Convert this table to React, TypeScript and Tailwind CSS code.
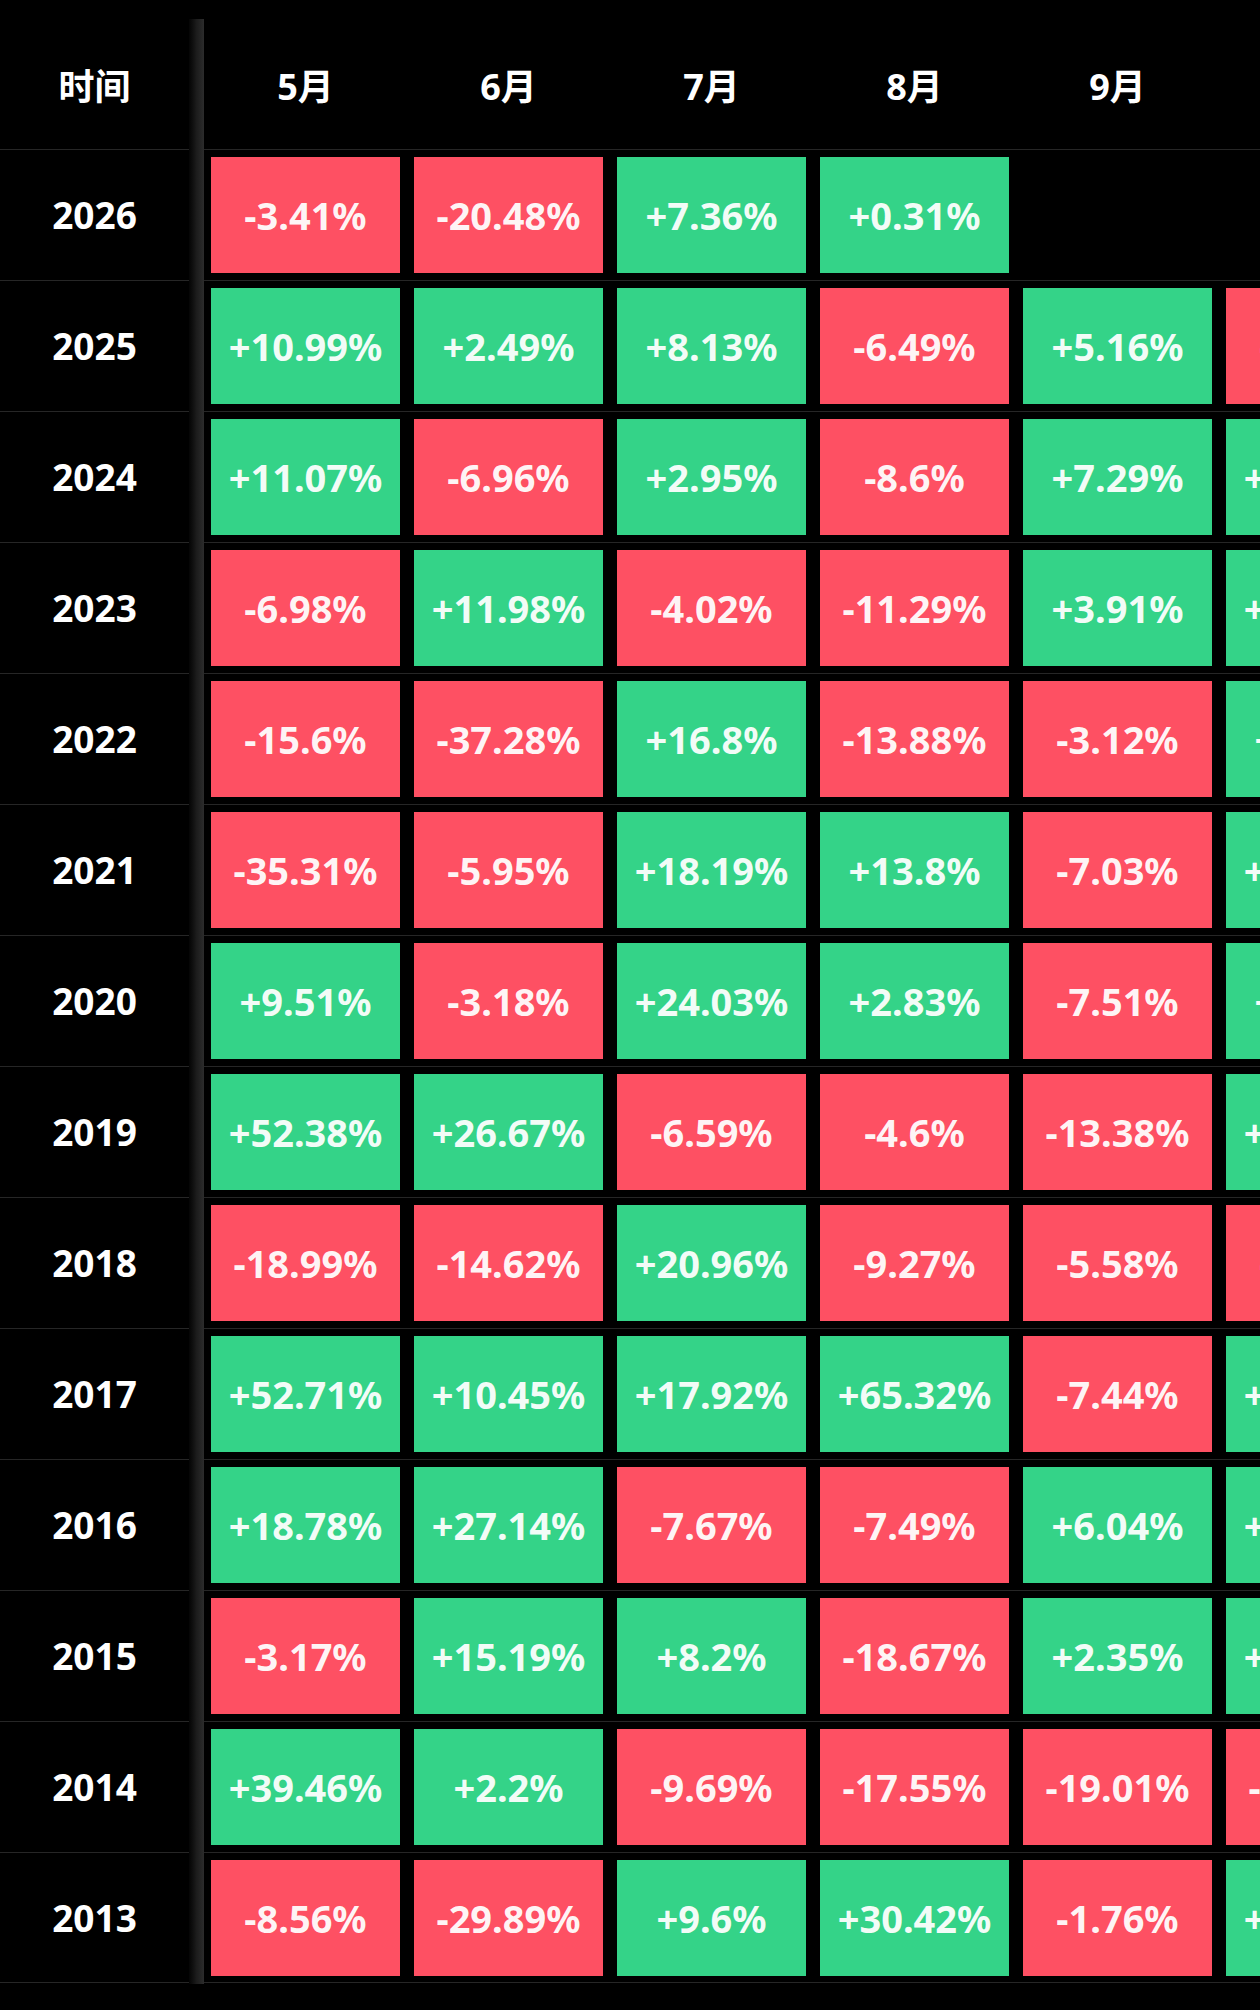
import React from "react";

const months = ["5月", "6月", "7月", "8月", "9月", "10月"];

const data: { year: string; vals: (string | null)[] }[] = [
  { year: "2026", vals: ["-3.41%", "-20.48%", "+7.36%", "+0.31%", null, null] },
  { year: "2025", vals: ["+10.99%", "+2.49%", "+8.13%", "-6.49%", "+5.16%", "-3.69%"] },
  { year: "2024", vals: ["+11.07%", "-6.96%", "+2.95%", "-8.6%", "+7.29%", "+10.76%"] },
  { year: "2023", vals: ["-6.98%", "+11.98%", "-4.02%", "-11.29%", "+3.91%", "+28.52%"] },
  { year: "2022", vals: ["-15.6%", "-37.28%", "+16.8%", "-13.88%", "-3.12%", "+5.56%"] },
  { year: "2021", vals: ["-35.31%", "-5.95%", "+18.19%", "+13.8%", "-7.03%", "+39.93%"] },
  { year: "2020", vals: ["+9.51%", "-3.18%", "+24.03%", "+2.83%", "-7.51%", "+27.7%"] },
  { year: "2019", vals: ["+52.38%", "+26.67%", "-6.59%", "-4.6%", "-13.38%", "+10.17%"] },
  { year: "2018", vals: ["-18.99%", "-14.62%", "+20.96%", "-9.27%", "-5.58%", "-3.83%"] },
  { year: "2017", vals: ["+52.71%", "+10.45%", "+17.92%", "+65.32%", "-7.44%", "+47.81%"] },
  { year: "2016", vals: ["+18.78%", "+27.14%", "-7.67%", "-7.49%", "+6.04%", "+14.71%"] },
  { year: "2015", vals: ["-3.17%", "+15.19%", "+8.2%", "-18.67%", "+2.35%", "+33.49%"] },
  { year: "2014", vals: ["+39.46%", "+2.2%", "-9.69%", "-17.55%", "-19.01%", "-12.95%"] },
  { year: "2013", vals: ["-8.56%", "-29.89%", "+9.6%", "+30.42%", "-1.76%", "+60.79%"] },
];

const font = {
  fontFamily: '"Noto Sans", "Noto Sans CJK SC", sans-serif',
};

export default function App() {
  return (
    <div
      className="w-[1260px] h-[2010px] bg-black overflow-hidden flex font-bold"
      style={font}
    >
      {/* fixed left column */}
      <div className="w-[189px] shrink-0 flex flex-col">
        <div className="h-[149px] flex items-center justify-center text-white text-[36px] pt-[24px]">
          时间
        </div>
        {data.map((r, i) => (
          <div
            key={r.year}
            className={`h-[131px] border-t border-[#262626] flex items-center justify-center text-white text-[37px] ${
              i === data.length - 1 ? "border-b" : ""
            }`}
          >
            {r.year}
          </div>
        ))}
      </div>

      {/* divider shadow */}
      <div className="w-[15px] shrink-0 mt-[19px] h-[1965px] bg-gradient-to-r from-[#050505] via-[#1c1c1c] to-[#2c2c2c]" />

      {/* scrolling month area */}
      <div className="flex-1 overflow-hidden flex flex-col">
        <div className="h-[149px] flex">
          {months.map((m) => (
            <div
              key={m}
              className="w-[203px] shrink-0 flex items-center justify-center text-white text-[36px] pt-[24px]"
            >
              {m}
            </div>
          ))}
        </div>
        {data.map((r, i) => (
          <div
            key={r.year}
            className={`h-[131px] w-[1240px] border-t border-[#262626] flex ${
              i === data.length - 1 ? "border-b" : ""
            }`}
          >
            {r.vals.map((v, j) => (
              <div key={j} className="w-[203px] shrink-0 px-[7px] py-[7px]">
                {v && (
                  <div
                    className={`h-[116px] w-[189px] flex items-center justify-center text-[38px] text-white/95 whitespace-nowrap ${
                      v.startsWith("-") ? "bg-[#fe5063]" : "bg-[#34d388]"
                    }`}
                  >
                    {v}
                  </div>
                )}
              </div>
            ))}
          </div>
        ))}
      </div>
    </div>
  );
}
